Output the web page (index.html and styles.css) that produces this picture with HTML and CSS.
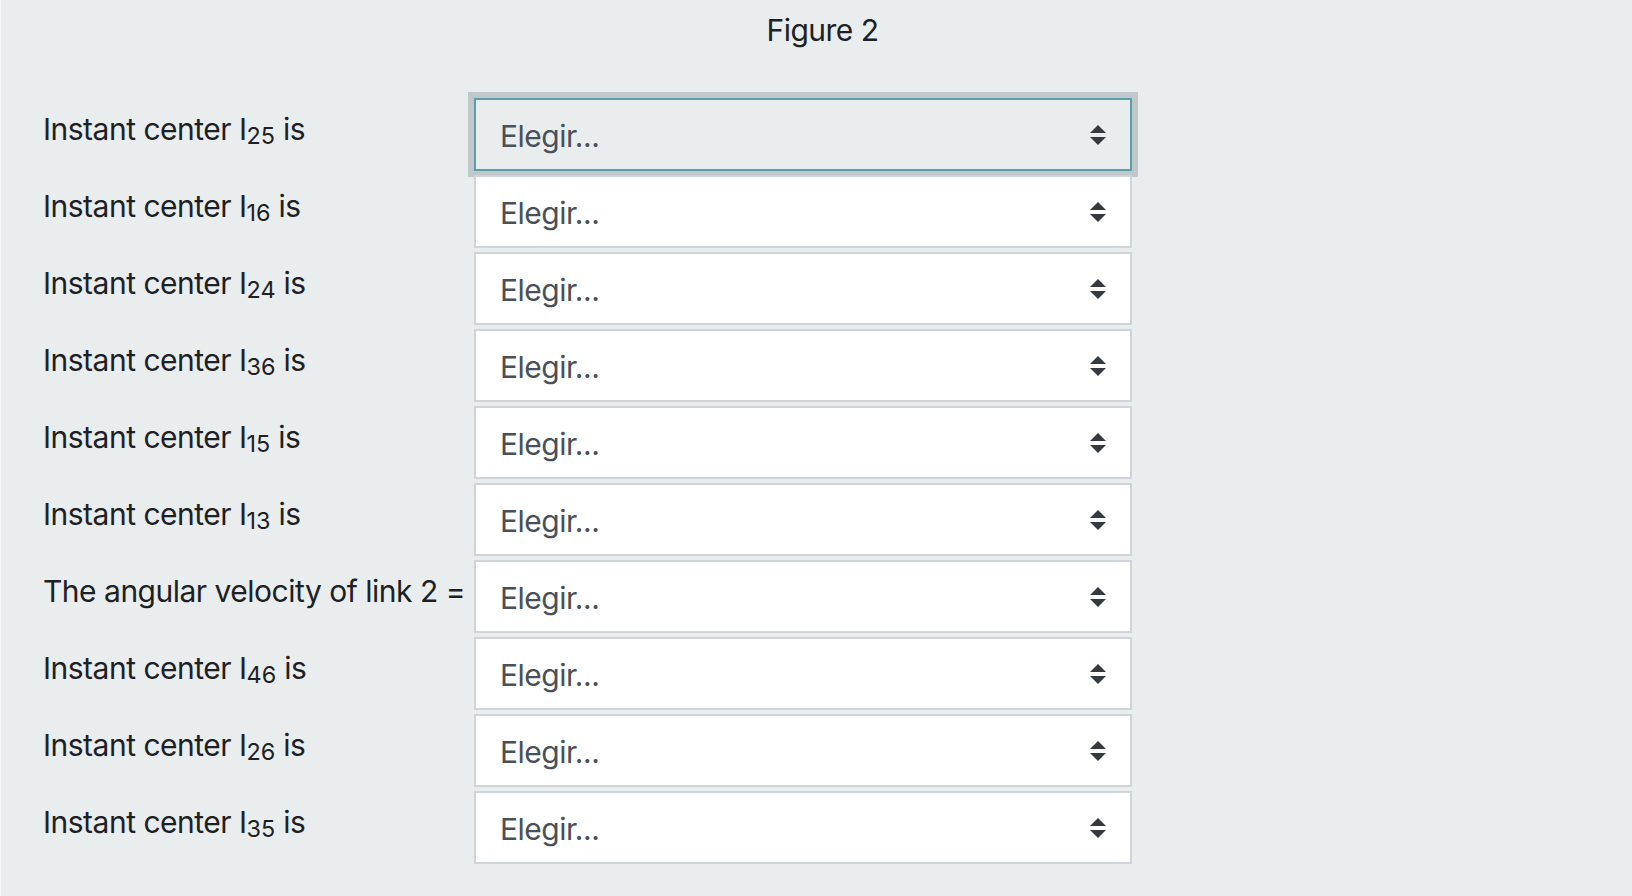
FILE: index.html
```html
<!DOCTYPE html>
<html lang="en">
<head>
<meta charset="utf-8">
<title>Figure 2</title>
<link rel="stylesheet" href="styles.css">
</head>
<body>
<div class="page">
  <div class="title">Figure 2</div>
  <div class="answers">
    <div class="label">Instant center I<sub>25</sub> is</div>
    <div class="select focused"><span>Elegir...</span><svg class="arrow" width="16" height="20" viewBox="0 0 4 5"><path d="M2 0L0 2h4zm0 5L0 3h4z"/></svg></div>

    <div class="label">Instant center I<sub>16</sub> is</div>
    <div class="select"><span>Elegir...</span><svg class="arrow" width="16" height="20" viewBox="0 0 4 5"><path d="M2 0L0 2h4zm0 5L0 3h4z"/></svg></div>

    <div class="label">Instant center I<sub>24</sub> is</div>
    <div class="select"><span>Elegir...</span><svg class="arrow" width="16" height="20" viewBox="0 0 4 5"><path d="M2 0L0 2h4zm0 5L0 3h4z"/></svg></div>

    <div class="label">Instant center I<sub>36</sub> is</div>
    <div class="select"><span>Elegir...</span><svg class="arrow" width="16" height="20" viewBox="0 0 4 5"><path d="M2 0L0 2h4zm0 5L0 3h4z"/></svg></div>

    <div class="label">Instant center I<sub>15</sub> is</div>
    <div class="select"><span>Elegir...</span><svg class="arrow" width="16" height="20" viewBox="0 0 4 5"><path d="M2 0L0 2h4zm0 5L0 3h4z"/></svg></div>

    <div class="label">Instant center I<sub>13</sub> is</div>
    <div class="select"><span>Elegir...</span><svg class="arrow" width="16" height="20" viewBox="0 0 4 5"><path d="M2 0L0 2h4zm0 5L0 3h4z"/></svg></div>

    <div class="label">The angular velocity of link 2 =</div>
    <div class="select"><span>Elegir...</span><svg class="arrow" width="16" height="20" viewBox="0 0 4 5"><path d="M2 0L0 2h4zm0 5L0 3h4z"/></svg></div>

    <div class="label">Instant center I<sub>46</sub> is</div>
    <div class="select"><span>Elegir...</span><svg class="arrow" width="16" height="20" viewBox="0 0 4 5"><path d="M2 0L0 2h4zm0 5L0 3h4z"/></svg></div>

    <div class="label">Instant center I<sub>26</sub> is</div>
    <div class="select"><span>Elegir...</span><svg class="arrow" width="16" height="20" viewBox="0 0 4 5"><path d="M2 0L0 2h4zm0 5L0 3h4z"/></svg></div>

    <div class="label">Instant center I<sub>35</sub> is</div>
    <div class="select"><span>Elegir...</span><svg class="arrow" width="16" height="20" viewBox="0 0 4 5"><path d="M2 0L0 2h4zm0 5L0 3h4z"/></svg></div>
  </div>
</div>
</body>
</html>
```
FILE: styles.css
```css
html, body {
  margin: 0;
  padding: 0;
  height: 100%;
}
body {
  background: #e9edee;
  font-family: Inter, "Noto Sans", sans-serif;
  font-size: 30px;
  line-height: 45px;
  letter-spacing: -0.5px;
  color: #1d2125;
}
.page {
  min-height: 100%;
  box-sizing: border-box;
  border-left: 1px solid #f6f7f8;
  padding-top: 8px;
}
.title {
  text-align: center;
  padding-left: 12px;
  margin-bottom: 45px;
}
.answers {
  display: grid;
  grid-template-columns: 473px 658px;
  row-gap: 4px;
}
.label {
  padding-left: 42px;
  padding-top: 9px;
  white-space: nowrap;
}
.label sub {
  font-size: 78%;
  line-height: 0;
  vertical-align: -4px;
  letter-spacing: 0;
}
.select {
  box-sizing: border-box;
  height: 73px;
  border: 2px solid #ced4da;
  background: #ffffff;
  padding: 12px 24px;
  display: flex;
  align-items: center;
  justify-content: space-between;
  color: #495057;
}
.select span {
  margin-top: 4px;
}
.select.focused {
  background: #e9edee;
  border-color: #5b9ea9;
  box-shadow: 0 0 0 6px #c0c8cb;
}
.arrow {
  display: block;
  fill: #343a40;
}
```
